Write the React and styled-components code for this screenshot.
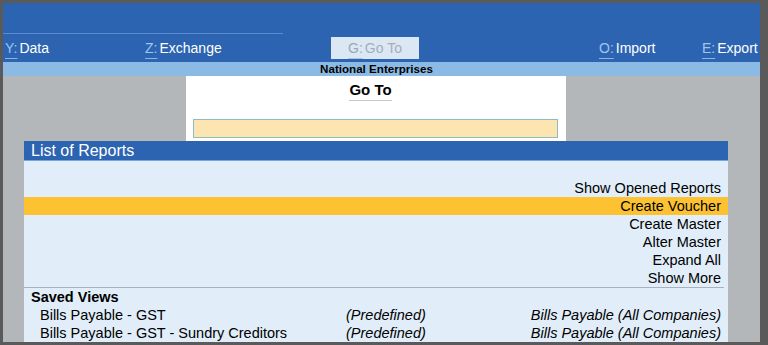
import React from "react";
import styled, { createGlobalStyle } from "styled-components";

const Global = createGlobalStyle`
  html, body { margin: 0; padding: 0; }
  body { width: 768px; height: 345px; overflow: hidden; font-family: "Liberation Sans", Arial, sans-serif; }
`;

const Frame = styled.div`
  width: 768px;
  height: 345px;
  box-sizing: border-box;
  background: #5a5a5a;
  padding: 3px 8px 3px 3px;
`;

const Inner = styled.div`
  height: 100%;
  display: flex;
  flex-direction: column;
  background: #b3b7ba;
  overflow: hidden;
`;

const TopBar = styled.div`
  background: #2d64b1;
  height: 59px;
  display: flex;
  flex-direction: column;
`;

const TopStrip = styled.div`
  height: 30px;
  width: 280px;
  border-bottom: 1px solid #5a8bd0;
`;

const MenuRow = styled.div`
  flex: 1;
  display: flex;
  align-items: center;
  padding-left: 2px;
`;

const MenuItem = styled.div`
  width: ${(p) => (p.$w ? `${p.$w}px` : "auto")};
  flex: none;
  font-size: 14px;
  color: #ffffff;
  white-space: nowrap;
`;

const Key = styled.span`
  color: ${(p) => (p.$dim ? "#9aa6b6" : "#9ec6ee")};
  text-decoration: underline;
  text-decoration-color: ${(p) => (p.$dim ? "#b8c2d0" : "#8db3df")};
  text-underline-offset: 5px;
  margin-right: 2px;
`;

const GoBox = styled.div`
  width: 88px;
  height: 22px;
  background: #dce7f4;
  color: #a3aebd;
  font-size: 14px;
  display: flex;
  align-items: center;
  justify-content: center;
`;

const Spacer = styled.div`
  flex: 1;
`;

const CompanyBar = styled.div`
  height: 14px;
  background: #8bbbe4;
  font-size: 11.6px;
  font-weight: bold;
  color: #000;
  text-align: center;
  line-height: 14px;
  padding-right: 10px;
`;

const GoToPanel = styled.div`
  margin-left: 183px;
  width: 380px;
  height: 66px;
  background: #ffffff;
  box-sizing: border-box;
  padding: 5px 8px 0 7px;
  display: flex;
  flex-direction: column;
`;

const GoTitle = styled.div`
  align-self: center;
  margin-right: 10px;
  font-size: 15px;
  font-weight: bold;
  color: #000;
  line-height: 18px;
  padding-bottom: 1px;
  border-bottom: 1px solid #c8c8c8;
`;

const GoInput = styled.div`
  margin-top: 18px;
  height: 19px;
  box-sizing: border-box;
  background: #fde5b2;
  border: 1px solid #8fbcc4;
`;

const ListPanel = styled.div`
  margin-left: 21px;
  width: 704px;
  flex: 1;
  background: #e1eef9;
  display: flex;
  flex-direction: column;
`;

const ListHeader = styled.div`
  height: 19px;
  background: #2d64b1;
  color: #fff;
  font-size: 16px;
  line-height: 19px;
  padding-left: 7px;
  border-bottom: 1px solid #7aa6d8;
`;

const ListBody = styled.div`
  padding-top: 18px;
  display: flex;
  flex-direction: column;
`;

const ActionRow = styled.div`
  height: 18px;
  line-height: 18px;
  font-size: 14.5px;
  color: #000;
  text-align: right;
  padding-right: 7px;
  background: ${(p) => (p.$active ? "#fdc232" : "transparent")};
`;

const Separator = styled.div`
  height: 1px;
  background: #a9b2ba;
  margin: 0 4px 0 0;
`;

const SectionTitle = styled.div`
  height: 18px;
  line-height: 18px;
  font-size: 14.5px;
  font-weight: bold;
  padding-left: 7px;
  color: #000;
`;

const ViewRow = styled.div`
  height: 18px;
  line-height: 18px;
  font-size: 14.5px;
  color: #000;
  display: grid;
  grid-template-columns: 306px 1fr auto;
  padding-left: 16px;
  padding-right: 7px;
`;

const Italic = styled.span`
  font-style: italic;
`;

const actions = [
  "Show Opened Reports",
  "Create Voucher",
  "Create Master",
  "Alter Master",
  "Expand All",
  "Show More",
];

const views = ["Bills Payable - GST", "Bills Payable - GST - Sundry Creditors"];

export default function App() {
  return (
    <>
      <Global />
      <Frame>
        <Inner>
          <TopBar>
            <TopStrip />
            <MenuRow>
              <MenuItem $w={140}>
                <Key>Y:</Key>Data
              </MenuItem>
              <MenuItem $w={186}>
                <Key>Z:</Key>Exchange
              </MenuItem>
              <GoBox>
                <Key $dim>G:</Key>Go To
              </GoBox>
              <Spacer />
              <MenuItem $w={103}>
                <Key>O:</Key>Import
              </MenuItem>
              <MenuItem $w={58}>
                <Key>E:</Key>Export
              </MenuItem>
            </MenuRow>
          </TopBar>
          <CompanyBar>National Enterprises</CompanyBar>
          <GoToPanel>
            <GoTitle>Go To</GoTitle>
            <GoInput />
          </GoToPanel>
          <ListPanel>
            <ListHeader>List of Reports</ListHeader>
            <ListBody>
              {actions.map((a, i) => (
                <ActionRow key={a} $active={i === 1}>
                  {a}
                </ActionRow>
              ))}
              <Separator />
              <SectionTitle>Saved Views</SectionTitle>
              {views.map((v) => (
                <ViewRow key={v}>
                  <span>{v}</span>
                  <Italic>(Predefined)</Italic>
                  <Italic>Bills Payable (All Companies)</Italic>
                </ViewRow>
              ))}
            </ListBody>
          </ListPanel>
        </Inner>
      </Frame>
    </>
  );
}
